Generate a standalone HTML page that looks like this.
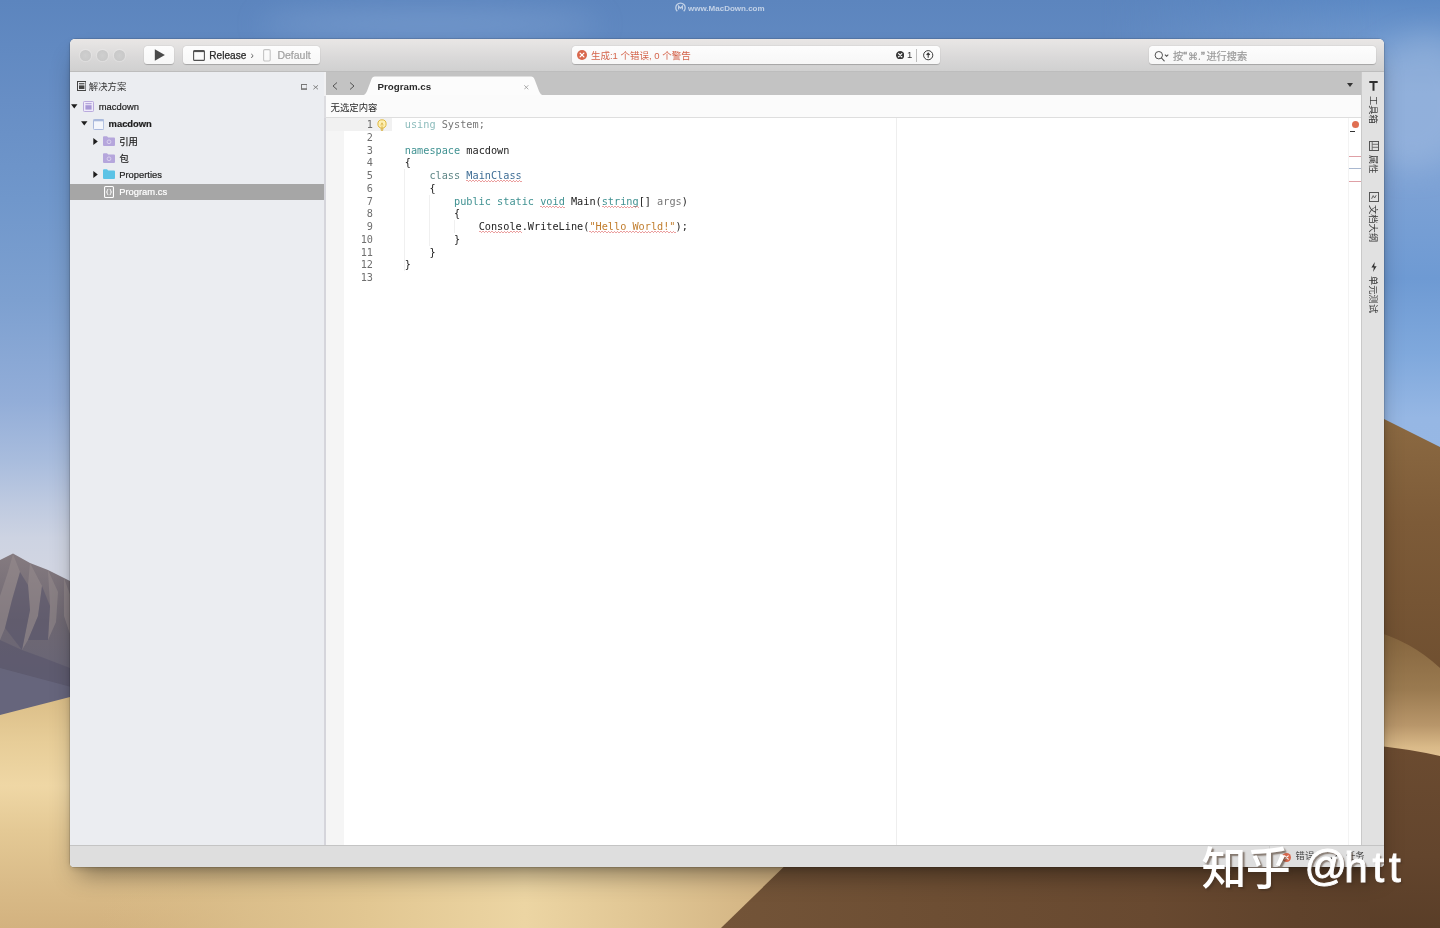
<!DOCTYPE html>
<html lang="zh-CN">
<head>
<meta charset="utf-8">
<title>Visual Studio for Mac - Program.cs</title>
<style>
*{box-sizing:border-box;margin:0;padding:0}
html,body{width:1440px;height:928px;overflow:hidden;background:#6a8fc4}
body{position:relative;font-family:"Liberation Sans","Noto Sans CJK SC",sans-serif;font-size:9.5px;color:#2b2b2b;-webkit-font-smoothing:antialiased}
.abs{position:absolute}
#bg{position:absolute;left:0;top:0;width:1440px;height:928px}
#win{will-change:transform;position:absolute;left:70px;top:39px;width:1314px;height:828px;border-radius:5px 5px 4px 4px;overflow:hidden;background:#fff;box-shadow:0 0 0 0.5px rgba(0,0,0,.22),0 14px 24px -8px rgba(0,0,0,.45),0 2px 6px rgba(0,0,0,.12)}
#toolbar{position:absolute;left:0;top:0;width:1314px;height:33px;background:linear-gradient(#e9e6e5 0,#e6e4e3 12%,#d9d8d8 60%,#d0d0d0 100%);border-bottom:1px solid #bdbdbd}
.tl{position:absolute;top:10.6px;width:11px;height:11px;border-radius:50%;background:radial-gradient(circle,#cfcfcf 0,#cacaca 55%,#c6c6c6 100%);box-shadow:0 0 0 1.2px rgba(255,255,255,.18)}
.btn{position:absolute;top:7px;height:18px;border-radius:3.5px;background:linear-gradient(#fdfdfd,#f7f7f7);box-shadow:0 .5px .8px rgba(0,0,0,.2),0 0 0 .5px rgba(0,0,0,.04)}
#sidebar{position:absolute;left:0;top:33px;width:254.300px;height:773px;background:#ebedf1}#vdiv{position:absolute;left:254.300px;top:33px;width:1.700px;height:773px;background:linear-gradient(#f1f1f3 0,#f1f1f3 24px,#dcdce0 24px,#dcdce0 46px,#d5d5db 46px,#d5d5db 100%)}
.row{position:absolute;left:0;width:255px;height:17px;line-height:17px;font-size:9.4px;white-space:nowrap;color:#1f1f1f;-webkit-text-stroke:.2px currentColor}
.row span{position:absolute;top:0}
#tabbar{position:absolute;left:256px;top:33px;width:1035px;height:24px;background:#c3c3c3}
#crumb{position:absolute;left:256px;top:56px;width:1035px;height:23px;background:#fbfbfb;border-bottom:1px solid #dedede}
#editor{position:absolute;left:256px;top:79px;width:1035px;height:727px;background:#fff}
#dock{position:absolute;left:1291px;top:33px;width:23px;height:773px;background:#e1e1e1;border-left:1px solid #c9c9c9}
#status{position:absolute;left:0;top:806px;width:1314px;height:22px;background:#dedede;border-top:1px solid #c4c4c4}
.code{position:absolute;left:0;top:0;font-family:"DejaVu Sans Mono","Liberation Mono",monospace;font-size:10.23px;line-height:12.75px;white-space:pre;color:#222}
.ln{position:absolute;width:30px;text-align:right;font-family:"DejaVu Sans Mono","Liberation Mono",monospace;font-size:10.23px;line-height:12.75px;color:#6f6f6f;white-space:pre}
.k{color:#3f9191}.kc{color:#5d8585}.kf{color:#8dbcbc}.g{color:#777}.ty{color:#3f6e96}.s{color:#c17d2d}
.sq{position:relative}.sq::after{content:"";position:absolute;left:0;right:0;top:10.3px;height:2px;background-image:repeating-linear-gradient(90deg,rgba(222,96,96,.6) 0 1.55px,transparent 1.55px 3.1px),repeating-linear-gradient(90deg,transparent 0 1.55px,rgba(222,96,96,.6) 1.55px 3.1px);background-size:100% 1px,100% 1px;background-position:0 0,0 1px;background-repeat:no-repeat}
.vt{position:absolute;left:-.5px;width:22px;writing-mode:vertical-rl;text-orientation:sideways;font-size:9.3px;line-height:22px;color:#3a3a3a;white-space:nowrap;letter-spacing:0}
</style>
</head>
<body>
<svg id="bg" viewBox="0 0 1440 928">
<defs>
<linearGradient id="sky" x1="0" y1="0" x2="0" y2="928" gradientUnits="userSpaceOnUse">
<stop offset="0" stop-color="#5c85be"/><stop offset=".108" stop-color="#678ec5"/><stop offset=".215" stop-color="#7097cb"/><stop offset=".323" stop-color="#7da0d0"/><stop offset=".431" stop-color="#92add8"/><stop offset=".495" stop-color="#a8bcdd"/><stop offset=".54" stop-color="#bdc9e0"/><stop offset=".58" stop-color="#cdd3e2"/><stop offset=".61" stop-color="#d1d5e2"/><stop offset="1" stop-color="#d2d6e2"/>
</linearGradient>
<linearGradient id="skyR" x1="0" y1="0" x2="0" y2="928" gradientUnits="userSpaceOnUse">
<stop offset="0" stop-color="#5d8ac5"/><stop offset=".04" stop-color="#6e97cd"/><stop offset=".1" stop-color="#7fa3d4"/><stop offset=".2" stop-color="#7da2d5"/><stop offset=".3" stop-color="#6e9ad3"/><stop offset=".38" stop-color="#7fa8dc"/><stop offset=".45" stop-color="#96b7e4"/><stop offset="1" stop-color="#9dbce6"/>
</linearGradient>
<linearGradient id="fadeR" x1="1100" y1="0" x2="1384" y2="0" gradientUnits="userSpaceOnUse">
<stop offset="0" stop-color="#fff" stop-opacity="0"/><stop offset="1" stop-color="#fff" stop-opacity="1"/>
</linearGradient>
<mask id="mR" maskUnits="userSpaceOnUse" x="0" y="0" width="1440" height="928"><rect x="1100" y="0" width="340" height="928" fill="url(#fadeR)"/></mask>
<linearGradient id="mtn" x1="0" y1="553" x2="0" y2="720" gradientUnits="userSpaceOnUse">
<stop offset="0" stop-color="#857b80"/><stop offset=".4" stop-color="#6f6872"/><stop offset="1" stop-color="#63637a"/>
</linearGradient>
<linearGradient id="sandL" x1="0" y1="695" x2="0" y2="928" gradientUnits="userSpaceOnUse">
<stop offset="0" stop-color="#dabd87"/><stop offset=".2" stop-color="#e7cd98"/><stop offset=".39" stop-color="#efd7a5"/><stop offset=".58" stop-color="#e4c995"/><stop offset=".8" stop-color="#dabc89"/><stop offset="1" stop-color="#d3b27f"/>
</linearGradient>
<linearGradient id="sandB" x1="0" y1="0" x2="820" y2="0" gradientUnits="userSpaceOnUse">
<stop offset="0" stop-color="#d9bc88" stop-opacity="0"/><stop offset=".12" stop-color="#d9bb86" stop-opacity="0"/><stop offset=".3" stop-color="#dcc08c" stop-opacity=".8"/><stop offset=".45" stop-color="#e2c792"/><stop offset=".64" stop-color="#ecd5a3"/><stop offset=".8" stop-color="#dfc492"/><stop offset="1" stop-color="#cdac7c"/>
</linearGradient>
<linearGradient id="duneTop" x1="0" y1="417" x2="0" y2="680" gradientUnits="userSpaceOnUse"><stop offset="0" stop-color="#8c6a42"/><stop offset=".4" stop-color="#7d5b38"/><stop offset="1" stop-color="#6f4f30"/></linearGradient>
<linearGradient id="duneLit" x1="0" y1="636" x2="0" y2="755" gradientUnits="userSpaceOnUse"><stop offset="0" stop-color="#86663f"/><stop offset=".45" stop-color="#9a7a50"/><stop offset=".75" stop-color="#b8966a"/><stop offset=".93" stop-color="#d9b988"/><stop offset="1" stop-color="#e0c090"/></linearGradient>
<linearGradient id="duneB" x1="720" y1="0" x2="1440" y2="0" gradientUnits="userSpaceOnUse"><stop offset="0" stop-color="#735438"/><stop offset=".3" stop-color="#6d4e33"/><stop offset=".6" stop-color="#684930"/><stop offset=".8" stop-color="#5f422b"/><stop offset="1" stop-color="#5a3e28"/></linearGradient>
<linearGradient id="duneLow" x1="0" y1="748" x2="0" y2="928" gradientUnits="userSpaceOnUse"><stop offset="0" stop-color="#6b4b30"/><stop offset=".6" stop-color="#63452d"/><stop offset="1" stop-color="#5a3e28"/></linearGradient>
<linearGradient id="duneR" x1="0" y1="417" x2="0" y2="928" gradientUnits="userSpaceOnUse">
<stop offset="0" stop-color="#90704c"/><stop offset=".2" stop-color="#826242"/><stop offset=".42" stop-color="#76563a"/><stop offset=".45" stop-color="#8a6a46"/><stop offset=".56" stop-color="#a38259"/><stop offset=".625" stop-color="#cfae7e"/><stop offset=".648" stop-color="#dcbc8c"/><stop offset=".665" stop-color="#6c4c33"/><stop offset="1" stop-color="#694930"/>
</linearGradient>
<filter id="bl" x="-50%" y="-50%" width="200%" height="200%"><feGaussianBlur stdDeviation="14"/></filter>
</defs>
<rect width="1440" height="928" fill="url(#sky)"/>
<rect width="1440" height="928" fill="url(#skyR)" mask="url(#mR)"/>
<g filter="url(#bl)" opacity=".5">
<ellipse cx="430" cy="24" rx="170" ry="14" fill="#86a7d6"/>
<ellipse cx="1412" cy="108" rx="60" ry="62" fill="#a4bde2"/>
<ellipse cx="1425" cy="60" rx="36" ry="24" fill="#a0bbe0"/>
</g>
<!-- left mountain -->
<path d="M0 560 L13 553.5 L30 563 L48 570 L70 581 L90 588 L90 720 L0 720Z" fill="url(#mtn)"/>
<g opacity=".5" fill="#9a8f90">
<path d="M13 554 L20 572 L12 600 L5 628 L0 640 L0 596 L8 572Z"/>
<path d="M30 563 L42 586 L38 616 L28 640 L22 650 L30 610 L28 585Z"/>
<path d="M48 570 L58 592 L56 622 L48 640 L50 606Z"/>
<path d="M64 578 L72 600 L70 634 L64 616Z"/>
</g>
<g opacity=".5" fill="#55526a">
<path d="M20 572 L28 585 L30 610 L22 650 L5 628 L12 600Z"/>
<path d="M42 586 L50 606 L48 640 L28 640 L38 616Z"/>
<path d="M0 640 L22 650 L44 658 L70 668 L90 690 L90 720 L0 720Z"/>
</g>
<path d="M0 668 L30 676 L60 684 L90 692 L90 720 L0 720Z" fill="#6c6c84" opacity=".6"/>
<!-- sand -->
<path d="M0 715 L70 697 L90 692 L90 840 L840 840 L840 928 L0 928Z" fill="url(#sandL)"/>
<rect x="0" y="840" width="840" height="88" fill="url(#sandB)"/>
<!-- dark dune right/bottom -->
<path d="M1370 412 L1440 447 L1440 928 L1370 928Z" fill="url(#duneTop)"/>
<path d="M1370 630 Q1410 640 1440 668 L1440 760 L1370 760Z" fill="url(#duneLit)"/>
<path d="M796 855 L1440 855 L1440 928 L721 928Z" fill="url(#duneB)"/>
<path d="M1370 745 Q1410 749 1440 756 L1440 928 L1370 928Z" fill="url(#duneLow)"/>
</svg>
<div id="win">
  <div id="toolbar">
    <div class="tl" style="left:10.2px"></div><div class="tl" style="left:27.2px"></div><div class="tl" style="left:44px"></div>
    <div class="btn" style="left:74px;width:30px">
      <svg class="abs" style="left:9.5px;top:3.2px" width="12" height="12" viewBox="0 0 12 12"><path d="M.8.3 L10.9 6 L.8 11.7Z" fill="#4a4a4a"/></svg>
    </div>
    <div class="btn" style="left:113px;width:136.5px">
      <svg class="abs" style="left:10px;top:3.6px" width="12" height="11" viewBox="0 0 12 11"><rect x=".6" y=".6" width="10.8" height="9.8" rx="1" fill="none" stroke="#505050" stroke-width="1.1"/><rect x=".6" y=".6" width="10.8" height="1.500" fill="#505050"/></svg>
      <span class="abs" id="tRelease" style="left:26.3px;top:1.2px;line-height:18.6px;font-size:10.1px;color:#2a2a2a;-webkit-text-stroke:.25px #2a2a2a">Release</span>
      <span class="abs" style="left:67.5px;top:.8px;line-height:18px;font-size:10px;color:#666">&#8250;</span>
      <svg class="abs" style="left:80.3px;top:2.8px" width="8" height="13" viewBox="0 0 8 13"><rect x=".6" y=".6" width="6.6" height="11.4" rx="1.2" fill="none" stroke="#c4c4c4" stroke-width="1.1"/></svg>
      <span class="abs" id="tDefault" style="left:94.4px;top:.4px;line-height:18.6px;font-size:10.5px;color:#a0a0a0;-webkit-text-stroke:.2px #a0a0a0">Default</span>
    </div>
    <div class="btn" id="statusfield" style="left:501.5px;width:368.5px">
      <svg class="abs" style="left:5.6px;top:4.2px" width="10" height="10" viewBox="0 0 10 10"><circle cx="5" cy="5" r="5" fill="#d8674c"/><path d="M3.1 3.1 L6.9 6.9 M6.9 3.1 L3.1 6.9" stroke="#fff" stroke-width="1.3" stroke-linecap="round"/></svg>
      <span class="abs" id="tBuild" style="left:19.4px;top:0;line-height:19px;font-size:9.5px;color:#d4644b;white-space:nowrap">生成:1 个错误, 0 个警告</span>
      <svg class="abs" style="left:324.5px;top:5px" width="8.4" height="8.4" viewBox="0 0 10 10"><circle cx="5" cy="5" r="5" fill="#3a3a3a"/><path d="M3.1 3.1 L6.9 6.9 M6.9 3.1 L3.1 6.9" stroke="#fff" stroke-width="1.4" stroke-linecap="round"/></svg>
      <span class="abs" style="left:335.6px;top:0;line-height:18.8px;font-size:9.5px;color:#333">1</span>
      <div class="abs" style="left:344.4px;top:2.5px;width:1px;height:13.5px;background:#bdbdbd"></div>
      <svg class="abs" style="left:351.7px;top:4.2px" width="10.4" height="10.4" viewBox="0 0 10.4 10.4"><circle cx="5.2" cy="5.2" r="4.6" fill="none" stroke="#3a3a3a" stroke-width="1"/><path d="M5.2 7.8 V3.4 M3.6 4.9 L5.2 3.1 L6.8 4.9" stroke="#3a3a3a" stroke-width="1.1" fill="none"/></svg>
    </div>
    <div class="btn" id="search" style="left:1079px;width:227px">
      <svg class="abs" style="left:4.5px;top:3.5px" width="16" height="12" viewBox="0 0 16 12"><circle cx="4.800" cy="5.200" r="3.700" fill="none" stroke="#505050" stroke-width="1"/><path d="M7.500 8 L10.200 10.900" stroke="#505050" stroke-width="1.100" stroke-linecap="round"/><path d="M10.900 4.700 L12.600 6.300 L14.300 4.700" stroke="#505050" stroke-width="1.100" fill="none"/></svg>
      <span class="abs" id="tSearch" style="left:24px;top:.6px;line-height:19.4px;font-size:10.2px;color:#9a9a9a;white-space:nowrap;-webkit-text-stroke:.2px #9a9a9a">按<span id="sQ1" style="font-size:11.5px;line-height:10px;-webkit-text-stroke:.45px #9a9a9a">“</span><span id="sCmd" style="font-family:'DejaVu Sans',sans-serif;font-size:10px;margin-left:.9px">&#8984;</span><span id="sDot" style="margin-left:.2px">.<span style="font-size:11.5px;line-height:10px;-webkit-text-stroke:.45px #9a9a9a">”</span></span><span id="sRest" style="margin-left:1.6px">进行搜索</span></span>
    </div>
  </div>
  <div id="sidebar">
    <svg class="abs" style="left:7px;top:9.4px" width="9.4" height="10" viewBox="0 0 9.4 10"><rect x=".5" y=".5" width="8.4" height="9" fill="none" stroke="#444" stroke-width="1"/><rect x="2" y="2.2" width="5.4" height="1.1" fill="#444"/><rect x="2" y="4.4" width="5.4" height="3.6" fill="#444"/></svg>
    <span class="abs" id="tSol" style="left:18.8px;top:5.8px;line-height:17px;font-size:9.4px;color:#333">解决方案</span>
    <svg class="abs" style="left:230.6px;top:12.2px" width="6.6" height="6" viewBox="0 0 6.6 6"><rect x=".5" y=".5" width="5.6" height="4.4" fill="none" stroke="#777" stroke-width="1"/><rect x="0" y="4.6" width="6.6" height="1.2" fill="#777"/></svg>
    <svg class="abs" style="left:242.6px;top:13px" width="5.4" height="4.6" viewBox="0 0 5.4 4.6"><path d="M.4.3 L5 4.3 M5 .3 L.4 4.3" stroke="#777" stroke-width=".9"/></svg>

    <div class="row" style="top:26.1px"><svg class="abs" style="left:1.1px;top:6px" width="6.5" height="4.6" viewBox="0 0 7 5"><path d="M0 .3 H7 L3.5 4.8Z" fill="#1e1e1e"/></svg>
      <svg class="abs" style="left:12.8px;top:2.9px" width="11" height="11" viewBox="0 0 11 11"><rect x=".5" y=".5" width="10" height="10" rx=".8" fill="#efeafa" stroke="#b9aadd" stroke-width="1"/><rect x="2.4" y="2.2" width="6.2" height="1" fill="#a898d6"/><rect x="2.4" y="4.2" width="6.2" height="4.4" fill="#a898d6"/></svg>
      <span id="tMac1" style="left:28.8px">macdown</span></div>
    <div class="row" style="top:43.1px"><svg class="abs" style="left:11.1px;top:6.2px" width="6.5" height="4.6" viewBox="0 0 7 5"><path d="M0 .3 H7 L3.5 4.8Z" fill="#1e1e1e"/></svg>
      <svg class="abs" style="left:22.6px;top:3.9px" width="11.2" height="11" viewBox="0 0 11.2 11"><rect x=".5" y=".5" width="10.2" height="10" rx=".8" fill="#f4f6fb" stroke="#a9b9dc" stroke-width="1"/><rect x=".5" y=".5" width="10.2" height="1.8" fill="#a9b9dc"/></svg>
      <span id="tMac2" style="left:38.6px;font-weight:bold;color:#1d1d1d">macdown</span></div>
    <div class="row" style="top:60.6px"><svg class="abs" style="left:22.6px;top:5px" width="5" height="7" viewBox="0 0 5 7"><path d="M.3 0 V7 L4.8 3.5Z" fill="#1e1e1e"/></svg><svg class="abs" style="left:33px;top:3.5px" width="12" height="10" viewBox="0 0 12 10"><path d="M0 1.2 Q0 .2 1 .2 H4 L5.2 1.6 H11 Q12 1.6 12 2.6 V9 Q12 10 11 10 H1 Q0 10 0 9Z" fill="#b5a6dc"/><circle cx="6" cy="5.8" r="1.9" fill="none" stroke="#d9d0ee" stroke-width="1"/></svg>
      <span id="tRef" style="left:49.2px">引用</span></div>
    <div class="row" style="top:77.9px"><svg class="abs" style="left:33px;top:3.1px" width="12" height="10" viewBox="0 0 12 10"><path d="M0 1.2 Q0 .2 1 .2 H4 L5.2 1.6 H11 Q12 1.6 12 2.6 V9 Q12 10 11 10 H1 Q0 10 0 9Z" fill="#b5a6dc"/><circle cx="6" cy="5.8" r="1.9" fill="none" stroke="#d9d0ee" stroke-width="1"/></svg>
      <span id="tPkg" style="left:49.6px">包</span></div>
    <div class="row" style="top:93.9px"><svg class="abs" style="left:22.6px;top:5px" width="5" height="7" viewBox="0 0 5 7"><path d="M.3 0 V7 L4.8 3.5Z" fill="#1e1e1e"/></svg><svg class="abs" style="left:33px;top:3.6px" width="12" height="10" viewBox="0 0 12 10"><path d="M0 1.2 Q0 .2 1 .2 H4 L5.2 1.6 H11 Q12 1.6 12 2.6 V9 Q12 10 11 10 H1 Q0 10 0 9Z" fill="#5cc3e6"/></svg>
      <span id="tProp" style="left:49.2px">Properties</span></div>
    <div class="row" style="top:111.8px;height:16.7px;background:#a6a6a6;color:#fff">
      <svg class="abs" style="left:33.8px;top:2.2px" width="10" height="12" viewBox="0 0 10 12"><rect x=".55" y=".55" width="8.9" height="10.9" rx="1" fill="none" stroke="#fff" stroke-width="1.1"/><path d="M4.300 3.300 Q3.300 3.300 3.300 4.200 V5.100 Q3.300 6 2.400 6 Q3.300 6 3.300 6.900 V7.800 Q3.300 8.700 4.300 8.700 M5.700 3.300 Q6.700 3.300 6.700 4.200 V5.100 Q6.700 6 7.600 6 Q6.700 6 6.700 6.900 V7.800 Q6.700 8.700 5.700 8.700" fill="none" stroke="#fff" stroke-width="1"/></svg>
      <span id="tProg" style="left:49.2px;line-height:16.2px">Program.cs</span></div>
  </div>
  <div id="vdiv"></div>
  <div id="tabbar">
    <svg class="abs" style="left:5.6px;top:9.6px" width="6" height="8" viewBox="0 0 6 8"><path d="M5 .5 L1 4 L5 7.5" fill="none" stroke="#555" stroke-width="1"/></svg>
    <svg class="abs" style="left:23.4px;top:9.6px" width="6" height="8" viewBox="0 0 6 8"><path d="M1 .5 L5 4 L1 7.5" fill="none" stroke="#555" stroke-width="1"/></svg>
    <svg class="abs" style="left:34px;top:4.4px" width="186" height="19.6" viewBox="0 0 186 20" preserveAspectRatio="none"><path d="M0 20 C5 20 6 18 7.5 14 L11 4.5 C12.3 1 13.5 .6 17 .6 H169 C172.500 .6 173.700 1 175 4.500 L178.500 14 C180 18 181 20 186 20Z" fill="#fcfcfc"/></svg>
    <span class="abs" id="tTab" style="left:51.5px;top:5.9px;line-height:18px;font-size:9.75px;font-weight:bold;color:#2a2a2a">Program.cs</span>
    <svg class="abs" style="left:198.4px;top:13px" width="4.600" height="4.600" viewBox="0 0 5 5"><path d="M.3.3 L4.700 4.700 M4.700 .3 L.3 4.700" stroke="#999" stroke-width=".9"/></svg>
    <svg class="abs" style="left:1021.4px;top:11.4px" width="6" height="4" viewBox="0 0 6 4"><path d="M0 0 H6 L3 4Z" fill="#333"/></svg>
  </div>
  <div id="crumb"><span class="abs" id="tCrumb" style="left:4.6px;top:4.1px;line-height:17px;font-size:9.4px;color:#2a2a2a">无选定内容</span></div>
  <div id="editor">
    <div class="abs" style="left:0;top:0;width:18px;height:728px;background:#f5f5f5"></div>
    <div class="abs" style="left:0;top:0;width:66px;height:13px;background:#f1f1f1"></div>
    <div class="abs" style="left:570px;top:0;width:1px;height:728px;background:#eeeeee"></div>
    <div class="abs" style="left:77.6px;top:51px;width:1px;height:102px;background:#f0f0f0"></div>
    <div class="abs" style="left:103.2px;top:77px;width:1px;height:51px;background:#f0f0f0"></div>
    <div class="abs" style="left:127.800px;top:102px;width:1px;height:13px;background:#f0f0f0"></div>
    <div class="ln" id="lnums" style="left:17px;top:1.000px">1
2
3
4
5
6
7
8
9
10
11
12
13</div>
    <svg class="abs" style="left:51px;top:1.4px" width="10" height="12" viewBox="0 0 10 12"><circle cx="5" cy="4.900" r="4.100" fill="#fdf0b4" stroke="#e0b840" stroke-width="1"/><path d="M3.500 9.900 H6.500 M3.900 11.300 H6.100" stroke="#d8b040" stroke-width="1.100"/><path d="M3.800 6.400 L5 3.800 L6.200 6.400 M5 6.400 V8.600" stroke="#d8ac38" stroke-width=".8" fill="none"/></svg>
    <div class="code" id="code" style="left:78.800px;top:1.000px"><span class="kf">using</span> <span class="g">System;</span>

<span class="k">namespace</span> macdown
{
    <span class="kc">class</span> <span class="ty sq">MainClass</span>
    {
        <span class="k">public</span> <span class="k">static</span> <span class="k sq">void</span> Main(<span class="k sq">string</span>[] <span class="g">args</span>)
        {
            <span class="sq">Console</span>.WriteLine(<span class="s sq">"Hello World!"</span>);
        }
    }
}
</div>
    <div class="abs" style="left:1022px;top:0;width:13px;height:728px;background:#fff;border-left:1px solid #f3f3f3"></div>
    <div class="abs" style="left:1025.6px;top:2.700px;width:7px;height:7px;border-radius:50%;background:#e06f52"></div>
    <div class="abs" style="left:1024.400px;top:12.800px;width:4.600px;height:1.200px;background:#333"></div>
    <div class="abs" style="left:1023px;top:37.500px;width:13px;height:1.400px;background:#dfa0a6"></div>
    <div class="abs" style="left:1023px;top:50.100px;width:13px;height:1.400px;background:#a9b8d0"></div>
    <div class="abs" style="left:1023px;top:63px;width:13px;height:1.400px;background:#dfa0a6"></div>
  </div>
  <div id="dock">
    <svg class="abs" style="left:7.4px;top:9.0px" width="9" height="10" viewBox="0 0 9 10"><path d="M.3 1 H8.700 M4.500 1 V9.800" stroke="#2e2e2e" stroke-width="2"/></svg>
    <div class="vt" id="v1" style="top:23.6px">工具箱</div>
    <svg class="abs" style="left:7.2px;top:69.4px" width="10" height="10" viewBox="0 0 10 10"><rect x=".5" y=".5" width="9" height="9" fill="none" stroke="#555" stroke-width="1"/><path d="M3.200 .5 V9.500 M3.200 3.300 H9.500 M3.200 6.300 H9.500" stroke="#555" stroke-width=".8"/></svg>
    <div class="vt" id="v2" style="top:82.6px">属性</div>
    <svg class="abs" style="left:6.8px;top:120.0px" width="10" height="10" viewBox="0 0 10 10"><rect x=".5" y=".5" width="9" height="9" fill="none" stroke="#555" stroke-width="1"/><path d="M2.600 6.800 L4.200 3.600 L5.600 6 L7.200 3.200" stroke="#555" stroke-width=".9" fill="none"/></svg>
    <div class="vt" id="v3" style="top:133.4px">文档大纲</div>
    <svg class="abs" style="left:8.8px;top:189.6px" width="6" height="10" viewBox="0 0 6 10"><path d="M3.800 0 L.4 5.600 H2.800 L2 10 L5.600 4.200 H3.200Z" fill="#333"/></svg>
    <div class="vt" id="v4" style="top:203.6px">单元测试</div>
  </div>
  <div id="status">
    <div class="abs" style="left:1199px;top:0;width:1px;height:21px;background:#cfcfcf"></div>
    <svg class="abs" style="left:1212px;top:6.500px" width="9" height="9" viewBox="0 0 10 10"><circle cx="5" cy="5" r="5" fill="#d8674c"/><path d="M3.100 3.100 L6.900 6.900 M6.900 3.100 L3.100 6.900" stroke="#fff" stroke-width="1.300" stroke-linecap="round"/></svg>
    <span class="abs" style="left:1225.600px;top:2px;line-height:17px;font-size:9.300px;color:#444">错误</span>
    <svg class="abs" style="left:1260px;top:7.500px" width="8" height="7" viewBox="0 0 8 7"><path d="M.8 3.600 L3 6 L7.200 .8" stroke="#333" stroke-width="1.300" fill="none"/></svg>
    <span class="abs" style="left:1276px;top:2px;line-height:17px;font-size:9.300px;color:#444">任务</span>
  </div>
</div>
<div class="abs" id="wmTop" style="will-change:transform;left:674px;top:1px;width:100px;height:13px;color:rgba(255,255,255,.62);font-size:8px;font-weight:bold;line-height:13px;white-space:nowrap">
  <svg class="abs" style="left:.5px;top:1.200px" width="11" height="11" viewBox="0 0 11 11"><path d="M2.300 9.300 A4.700 4.700 0 1 1 8.700 9.300" fill="none" stroke="rgba(255,255,255,.62)" stroke-width="1.300"/><path d="M3.600 7.600 V4.200 L5.500 6.200 L7.400 4.200 V7.600" fill="none" stroke="rgba(255,255,255,.62)" stroke-width="1.200"/></svg>
  <span class="abs" id="tWm" style="left:14px;top:.6px">www.MacDown.com</span></div>
<div class="abs" id="wmBot" style="left:0;top:0;width:1440px;height:928px;color:#fff;white-space:nowrap;text-shadow:2px 2px 1.5px rgba(70,50,35,.6);pointer-events:none"><span class="abs" id="tZh" style="left:1201.6px;top:840.2px;font-size:45px;line-height:60px;font-weight:500;letter-spacing:-.8px">知乎</span><span class="abs" id="tAt" style="left:1304.6px;top:835.8px;font-size:42px;line-height:60px;-webkit-text-stroke:.9px #fff">@<span class="abs" id="tHtt" style="left:39.6px;top:1.8px;font-size:42.2px;line-height:60px;letter-spacing:4.8px">htt</span></span></div>
</body>
</html>
